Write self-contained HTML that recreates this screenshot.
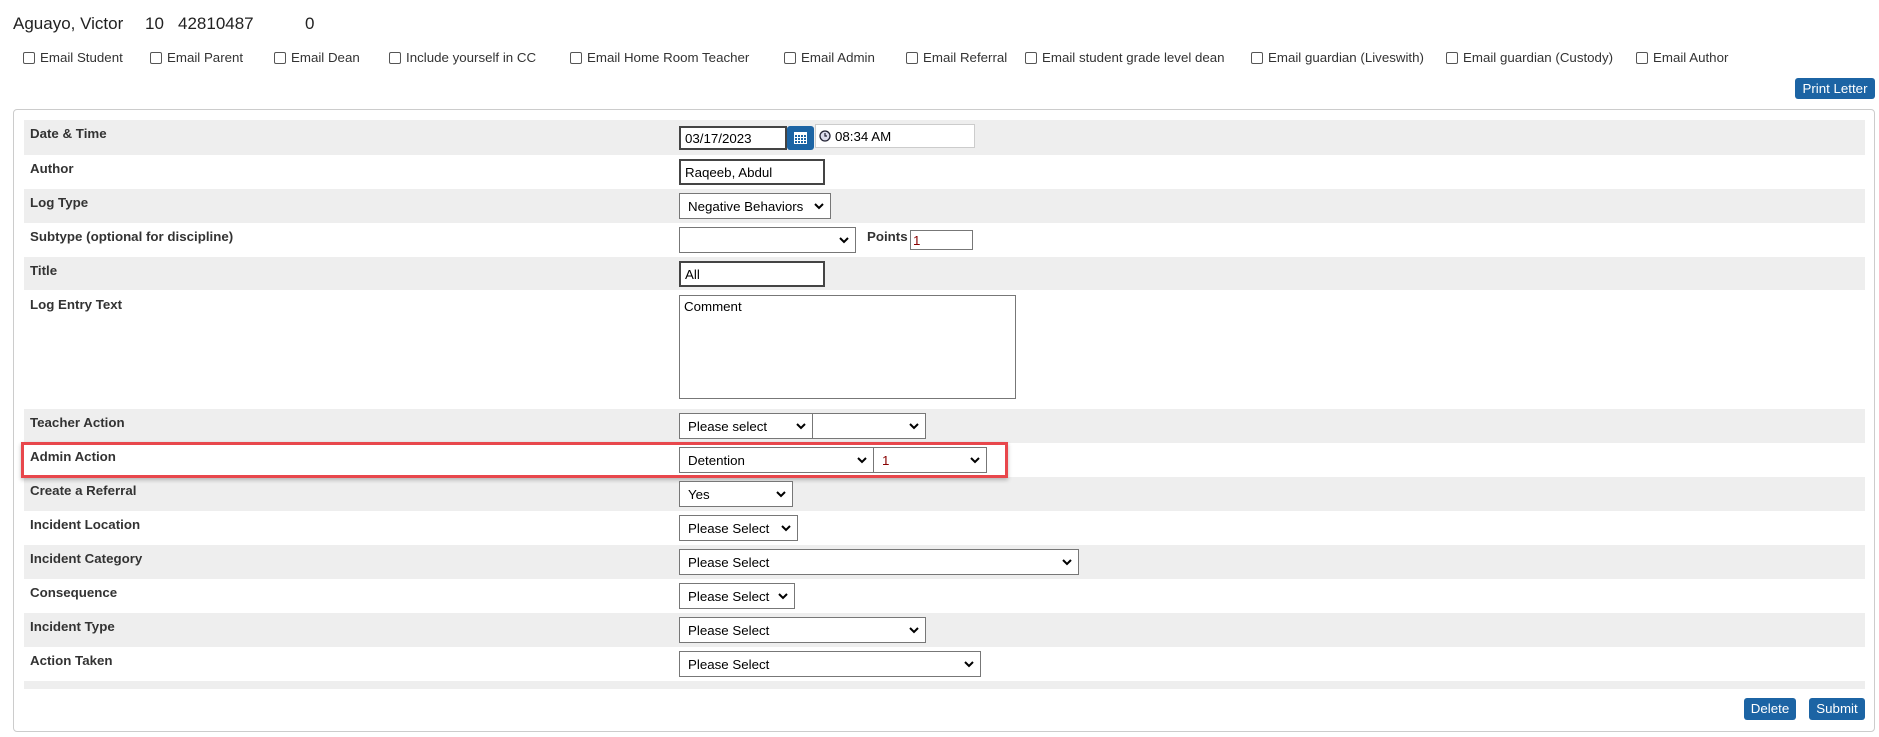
<!DOCTYPE html>
<html><head><meta charset="utf-8"><style>
*{box-sizing:border-box;margin:0;padding:0}
body{width:1879px;height:737px;background:#fff;font-family:"Liberation Sans",Arial,sans-serif;color:#333;position:relative;overflow:hidden}
.a{position:absolute}
.name{top:14px;font-size:17px;color:#222;white-space:pre}
.cb{top:50px;font-size:13.3px;display:flex;align-items:center;white-space:nowrap;color:#333}
.cb i{display:inline-block;width:12px;height:12px;border:1px solid #555;border-radius:2px;margin-right:5px;background:#fff}
.btn{background:#1c64a4;color:#fff;font-size:13.3px;border-radius:3px;text-align:center;line-height:22px}
.panel{left:13px;top:109px;width:1862px;height:623px;border:1px solid #ccc;border-radius:4px}
.row{left:24px;width:1841px}
.g{background:#eee}
.lbl{left:30px;font-weight:bold;font-size:13.3px;color:#333}
.in{border:2px solid #444;background:#fff;font-size:13.3px;color:#000;padding-left:4px;display:flex;align-items:center}
.sel{border:1px solid #777;background:#fff;font-size:13.3px;color:#000;padding-left:8px;display:flex;align-items:center;height:26px}
.sel svg{position:absolute;right:6px;top:9px}
</style></head><body>
<div class="a name" style="left:13px">Aguayo, Victor</div>
<div class="a name" style="left:145px">10</div>
<div class="a name" style="left:178px">42810487</div>
<div class="a name" style="left:305px">0</div>
<div class="a cb" style="left:23px"><i></i>Email Student</div>
<div class="a cb" style="left:150px"><i></i>Email Parent</div>
<div class="a cb" style="left:274px"><i></i>Email Dean</div>
<div class="a cb" style="left:389px"><i></i>Include yourself in CC</div>
<div class="a cb" style="left:570px"><i></i>Email Home Room Teacher</div>
<div class="a cb" style="left:784px"><i></i>Email Admin</div>
<div class="a cb" style="left:906px"><i></i>Email Referral</div>
<div class="a cb" style="left:1025px"><i></i>Email student grade level dean</div>
<div class="a cb" style="left:1251px"><i></i>Email guardian (Liveswith)</div>
<div class="a cb" style="left:1446px"><i></i>Email guardian (Custody)</div>
<div class="a cb" style="left:1636px"><i></i>Email Author</div>
<div class="a btn" style="left:1795px;top:78px;width:80px;height:21px;line-height:21px">Print Letter</div>
<div class="a panel"></div>

<div class="a row g" style="top:120px;height:35px"></div>
<div class="a row g" style="top:189px;height:34px"></div>
<div class="a row g" style="top:257px;height:33px"></div>
<div class="a row g" style="top:409px;height:34px"></div>
<div class="a row g" style="top:477px;height:34px"></div>
<div class="a row g" style="top:545px;height:34px"></div>
<div class="a row g" style="top:613px;height:34px"></div>
<div class="a row g" style="top:681px;height:8px"></div>

<div class="a lbl" style="top:126px">Date &amp; Time</div>
<div class="a lbl" style="top:161px">Author</div>
<div class="a lbl" style="top:195px">Log Type</div>
<div class="a lbl" style="top:229px">Subtype (optional for discipline)</div>
<div class="a lbl" style="top:263px">Title</div>
<div class="a lbl" style="top:297px">Log Entry Text</div>
<div class="a lbl" style="top:415px">Teacher Action</div>
<div class="a lbl" style="top:449px">Admin Action</div>
<div class="a lbl" style="top:483px">Create a Referral</div>
<div class="a lbl" style="top:517px">Incident Location</div>
<div class="a lbl" style="top:551px">Incident Category</div>
<div class="a lbl" style="top:585px">Consequence</div>
<div class="a lbl" style="top:619px">Incident Type</div>
<div class="a lbl" style="top:653px">Action Taken</div>

<div class="a in" style="left:679px;top:126px;width:108px;height:24px">03/17/2023</div>
<div class="a" style="left:787px;top:126px;width:27px;height:24px;background:#1c64a4;border-radius:3px">
<svg width="27" height="24"><rect x="7" y="6" width="13" height="12" fill="#fff"/><g fill="#1c64a4"><rect x="8" y="9" width="2" height="2"/><rect x="11" y="9" width="2" height="2"/><rect x="14" y="9" width="2" height="2"/><rect x="17" y="9" width="2" height="2"/><rect x="8" y="12" width="2" height="2"/><rect x="11" y="12" width="2" height="2"/><rect x="14" y="12" width="2" height="2"/><rect x="17" y="12" width="2" height="2"/><rect x="8" y="15" width="2" height="2"/><rect x="11" y="15" width="2" height="2"/><rect x="14" y="15" width="2" height="2"/><rect x="17" y="15" width="2" height="2"/></g></svg></div>
<div class="a" style="left:815px;top:124px;width:160px;height:24px;border:1px solid #ccc;background:#fff;font-size:13.3px;color:#000;display:flex;align-items:center;padding-left:3px">
<svg width="12" height="12" style="margin-right:4px"><circle cx="6" cy="6" r="5" fill="#dde" stroke="#223" stroke-width="1.3"/><path d="M6 3V6H8" stroke="#223" fill="none" stroke-width="1.2"/></svg>08:34 AM</div>
<div class="a in" style="left:679px;top:159px;width:146px;height:26px">Raqeeb, Abdul</div>
<div class="a sel" style="left:679px;top:193px;width:152px;height:26px">Negative Behaviors<svg width="10" height="7"><path d="M1 1L5 5L9 1" stroke="#000" stroke-width="2" fill="none"/></svg></div>
<div class="a sel" style="left:679px;top:227px;width:177px;height:26px"><svg width="10" height="7"><path d="M1 1L5 5L9 1" stroke="#000" stroke-width="2" fill="none"/></svg></div>
<div class="a" style="left:867px;top:229px;font-weight:bold;font-size:13.3px">Points</div>
<div class="a" style="left:910px;top:230px;width:63px;height:20px;border:1px solid #777;background:#fff;font-size:13.3px;color:#800;padding-left:2px;line-height:19px">1</div>
<div class="a in" style="left:679px;top:261px;width:146px;height:26px">All</div>
<div class="a" style="left:679px;top:295px;width:337px;height:104px;border:1px solid #777;background:#fff;font-size:13.3px;color:#000;padding:3px 4px">Comment</div>

<div class="a sel" style="left:679px;top:413px;width:134px">Please select<svg width="10" height="7"><path d="M1 1L5 5L9 1" stroke="#000" stroke-width="2" fill="none"/></svg></div>
<div class="a sel" style="left:812px;top:413px;width:114px"><svg width="10" height="7"><path d="M1 1L5 5L9 1" stroke="#000" stroke-width="2" fill="none"/></svg></div>
<div class="a sel" style="left:679px;top:447px;width:195px">Detention<svg width="10" height="7"><path d="M1 1L5 5L9 1" stroke="#000" stroke-width="2" fill="none"/></svg></div>
<div class="a sel" style="left:873px;top:447px;width:114px;color:#800">1<svg width="10" height="7"><path d="M1 1L5 5L9 1" stroke="#000" stroke-width="2" fill="none"/></svg></div>
<div class="a" style="left:21px;top:442px;width:987px;height:36px;border:3px solid #e8474c;box-shadow:0 2px 4px rgba(0,0,0,.25)"></div>
<div class="a sel" style="left:679px;top:481px;width:114px">Yes<svg width="10" height="7"><path d="M1 1L5 5L9 1" stroke="#000" stroke-width="2" fill="none"/></svg></div>
<div class="a sel" style="left:679px;top:515px;width:119px">Please Select<svg width="10" height="7"><path d="M1 1L5 5L9 1" stroke="#000" stroke-width="2" fill="none"/></svg></div>
<div class="a sel" style="left:679px;top:549px;width:400px">Please Select<svg width="10" height="7"><path d="M1 1L5 5L9 1" stroke="#000" stroke-width="2" fill="none"/></svg></div>
<div class="a sel" style="left:679px;top:583px;width:116px">Please Select<svg width="10" height="7"><path d="M1 1L5 5L9 1" stroke="#000" stroke-width="2" fill="none"/></svg></div>
<div class="a sel" style="left:679px;top:617px;width:247px">Please Select<svg width="10" height="7"><path d="M1 1L5 5L9 1" stroke="#000" stroke-width="2" fill="none"/></svg></div>
<div class="a sel" style="left:679px;top:651px;width:302px">Please Select<svg width="10" height="7"><path d="M1 1L5 5L9 1" stroke="#000" stroke-width="2" fill="none"/></svg></div>

<div class="a btn" style="left:1744px;top:698px;width:52px;height:22px">Delete</div>
<div class="a btn" style="left:1809px;top:698px;width:56px;height:22px">Submit</div>
</body></html>
